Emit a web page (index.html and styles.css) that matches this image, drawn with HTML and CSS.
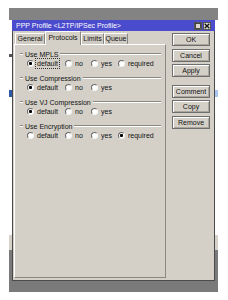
FILE: index.html
```html
<!DOCTYPE html>
<html lang="en">
<head>
    <meta charset="UTF-8">
    <title>PPP Profile</title>
    <link rel="stylesheet" href="styles.css">
</head>
<body>
    <div class="desk">
        <div class="desk-top"></div>
        <div class="desk-mid">
            <div class="strip strip-left"></div>
            <section class="dialog">
                <div class="titlebar">
                    <span class="title">PPP Profile &lt;L2TP/IPSec Profile&gt;</span>
                    <span class="title-btns">
                        <span class="tbtn">
                            <svg width="6" height="6" viewBox="0 0 6 6"><rect x="0.5" y="0.5" width="5" height="5" fill="none" stroke="#222" stroke-width="0.8"/></svg>
                        </span>
                        <span class="tbtn">
                            <svg width="6" height="6" viewBox="0 0 6 6"><path d="M0.7 0.7 L5.3 5.3 M5.3 0.7 L0.7 5.3" stroke="#111" stroke-width="1.3"/></svg>
                        </span>
                    </span>
                </div>
                <div class="window">
                    <div class="main">
                        <div class="tabs">
                            <span class="tab tab-general">General</span>
                            <span class="tab tab-protocols active">Protocols</span>
                            <span class="tab tab-limits">Limits</span>
                            <span class="tab tab-queue">Queue</span>
                        </div>
                        <div class="panel">
                            <div class="group">
                                <div class="legend"><span>Use MPLS</span></div>
                                <div class="options">
                                    <label class="opt"><i class="radio checked"></i><span class="focus">default</span></label>
                                    <label class="opt"><i class="radio"></i>no</label>
                                    <label class="opt"><i class="radio"></i>yes</label>
                                    <label class="opt"><i class="radio"></i>required</label>
                                </div>
                            </div>
                            <div class="group">
                                <div class="legend"><span>Use Compression</span></div>
                                <div class="options">
                                    <label class="opt"><i class="radio checked"></i>default</label>
                                    <label class="opt"><i class="radio"></i>no</label>
                                    <label class="opt"><i class="radio"></i>yes</label>
                                </div>
                            </div>
                            <div class="group">
                                <div class="legend"><span>Use VJ Compression</span></div>
                                <div class="options">
                                    <label class="opt"><i class="radio checked"></i>default</label>
                                    <label class="opt"><i class="radio"></i>no</label>
                                    <label class="opt"><i class="radio"></i>yes</label>
                                </div>
                            </div>
                            <div class="group">
                                <div class="legend"><span>Use Encryption</span></div>
                                <div class="options">
                                    <label class="opt"><i class="radio"></i>default</label>
                                    <label class="opt"><i class="radio"></i>no</label>
                                    <label class="opt"><i class="radio"></i>yes</label>
                                    <label class="opt"><i class="radio checked"></i>required</label>
                                </div>
                            </div>
                        </div>
                    </div>
                    <div class="side">
                        <button>OK</button>
                        <button>Cancel</button>
                        <button>Apply</button>
                        <button class="gap">Comment</button>
                        <button>Copy</button>
                        <button>Remove</button>
                    </div>
                </div>
            </section>
            <div class="strip strip-right"></div>
        </div>
    </div>
</body>
</html>
```

FILE: styles.css
```css
body {
    margin: 0;
    background: #fff;
    font-family: "Liberation Sans", Arial, sans-serif;
    font-size: 7px;
    color: #111;
}
.desk {
    margin: 8px 0 0 9px;
    width: 209px;
    height: 284px;
    background: #7a7a7a;
    display: flex;
    flex-direction: column;
}
.desk-top {
    height: 12px;
    background: #838383;
}
.desk-mid {
    display: flex;
    height: 261px;
}
.strip {
    width: 3px;
}
.strip-left {
    background: linear-gradient(#fff 0 34px, #555 34px 37px, #fff 37px 70px, #2d5aa8 70px 77px, #fff 77px 215px, #d6d2ca 215px 230px, #7a7a7a 230px);
}
.strip-right {
    background: linear-gradient(#fff 0 70px, #a9c4ee 70px 77px, #fff 77px 215px, #d6d2ca 215px 230px, #7a7a7a 230px);
}
.dialog {
    width: 203px;
    display: flex;
    flex-direction: column;
}
.titlebar {
    height: 11px;
    background: #4b4bcd;
    color: #fff;
    display: flex;
    align-items: center;
    justify-content: space-between;
    padding: 0 4px 0 4px;
}
.title-btns {
    display: flex;
    gap: 1px;
}
.tbtn {
    width: 8px;
    height: 8px;
    box-sizing: border-box;
    background: #dcd9d2;
    border: 1px solid #555;
    display: flex;
    align-items: center;
    justify-content: center;
}
.window {
    flex: 1;
    background: #d4d0c8;
    border: 1px solid #4a4a4a;
    border-top: none;
    display: flex;
    padding: 0 3px 2px 1px;
}
.main {
    width: 152px;
    display: flex;
    flex-direction: column;
}
.tabs {
    display: flex;
    align-items: flex-end;
    height: 13px;
    padding-left: 1px;
}
.tab {
    height: 11px;
    box-sizing: border-box;
    border: 1px solid;
    border-color: #fff #8a8780 transparent #fff;
    border-bottom: none;
    text-align: center;
    line-height: 10px;
    background: #cfcbc3;
}
.tab.active {
    height: 14px;
    margin-bottom: -1px;
    background: #d4d0c8;
    position: relative;
    z-index: 1;
    line-height: 11px;
}
.tab-general { width: 30px; }
.tab-protocols { width: 36px; }
.tab-limits { width: 23px; }
.tab-queue { width: 24px; }
.panel {
    flex: 1;
    border: 1px solid;
    border-color: #fff #8a8780 #8a8780 #fff;
    padding: 5px 4px 0 5px;
}
.group {
    height: 24px;
}
.legend {
    display: flex;
    align-items: center;
    height: 8px;
}
.legend::before,
.legend::after {
    content: "";
    height: 0;
    border-top: 1px solid #8c8880;
    border-bottom: 1px solid #fff;
}
.legend::before {
    width: 3px;
}
.legend::after {
    flex: 1;
}
.legend span {
    padding: 0 2px;
}
.options {
    display: grid;
    grid-template-columns: 38px 26px 27px auto;
    height: 10px;
    align-items: center;
    margin-left: 7px;
}
.opt {
    display: flex;
    align-items: center;
    gap: 3px;
}
.radio {
    width: 7px;
    height: 7px;
    box-sizing: border-box;
    border-radius: 50%;
    border: 1px solid;
    border-color: #6a6a6a #f4f4f4 #f4f4f4 #6a6a6a;
    background: #fff;
}
.radio.checked {
    background: radial-gradient(circle, #000 1.3px, #fff 1.8px);
}
.focus {
    outline: 1px dotted #333;
    outline-offset: 1px;
}
.side {
    display: flex;
    flex-direction: column;
    gap: 2.5px;
    margin-left: 6px;
    padding-top: 2px;
}
button {
    width: 38px;
    height: 13px;
    padding: 0;
    font-family: inherit;
    font-size: 7px;
    color: #111;
    background: #d4d0c8;
    border: 1px solid #6e6e6e;
    box-shadow: inset 1px 1px #fff, inset -1px -1px #aaa69e;
}
button.gap {
    margin-top: 5px;
}
```
